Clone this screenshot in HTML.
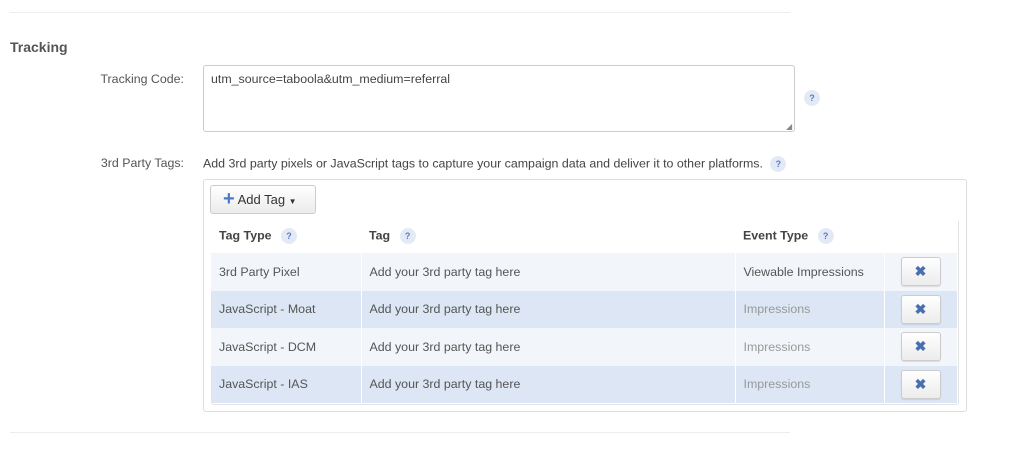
<!DOCTYPE html>
<html><head><style>
body{margin:0;width:1024px;height:450px;background:#fff;font-family:"Liberation Sans",Arial,sans-serif;font-size:12.4px;color:#444;position:relative;overflow:hidden}
.a{position:absolute}
.q{display:inline-block;width:16px;height:16px;border-radius:50%;background:#e3eaf6;color:#5a7bbf;font-size:9px;font-weight:bold;text-align:center;line-height:16px;vertical-align:middle}
.lab{position:absolute;right:840px;color:#555;font-size:12.4px}
table{border-collapse:collapse;position:absolute;left:211px;top:219px;width:747px}
td{height:37.5px;padding:0 8px;border-right:1px solid #fff;font-size:12.4px;color:#555}
th{height:34px;text-align:left;padding:0 8px;font-size:12.4px;color:#444;background:#fff}
tr.o td{background:#f2f5fa}
tr.e td{background:#dce6f4}
.x{width:38px;height:27px;margin-left:8px;border:1px solid #ccc;border-radius:3px;background:linear-gradient(#fff,#ececec);box-shadow:0 1px 1px rgba(0,0,0,.1);text-align:center;line-height:27px;color:#4a6fb0;font-weight:bold;font-size:14px}
.g{color:#999}
</style></head><body>
<div class="a" style="left:10px;top:12px;width:780px;height:1px;background:#eee"></div>
<div class="a" style="left:10px;top:39px;font-size:14px;font-weight:bold;color:#555">Tracking</div>
<div class="lab" style="top:72px">Tracking Code:</div>
<div class="a" style="left:203px;top:65px;width:590px;height:65px;border:1px solid #ccc;border-radius:3px"></div>
<div class="a" style="left:211px;top:72px;color:#444">utm_source=taboola&amp;utm_medium=referral</div>
<div class="a" style="left:786px;top:122px;font-size:8px;color:#888">◢</div>
<span class="q a" style="left:804px;top:90px">?</span>
<div class="lab" style="top:156px">3rd Party Tags:</div>
<div class="a" style="left:203px;top:156px;color:#444">Add 3rd party pixels or JavaScript tags to capture your campaign data and deliver it to other platforms. <span class="q" style="margin-left:4px">?</span></div>
<div class="a" style="left:203px;top:179px;width:762px;height:231px;border:1px solid #ddd;border-radius:3px"></div>
<div class="a" style="left:210px;top:185px;width:104px;height:27px;border:1px solid #ccc;border-radius:3px;background:linear-gradient(#fff,#ebebeb);line-height:27px;font-size:13px;color:#333">
<span style="color:#4a7bc4;font-size:20px;font-weight:bold;margin-left:12px;vertical-align:-1px">+</span> Add Tag <span style="font-size:8px">▼</span></div>
<div class="a" style="left:211px;top:219px;width:746px;height:184px;border:1px solid #e3e3e3;border-radius:3px"></div>
<table>
<tr><th style="width:134px">Tag Type <span class="q" style="margin-left:6px">?</span></th><th style="width:358px">Tag <span class="q" style="margin-left:6px">?</span></th><th style="width:133px">Event Type <span class="q" style="margin-left:6px">?</span></th><th></th></tr>
<tr class="o"><td>3rd Party Pixel</td><td>Add your 3rd party tag here</td><td>Viewable Impressions</td><td><div class="x">✖</div></td></tr>
<tr class="e"><td>JavaScript - Moat</td><td>Add your 3rd party tag here</td><td class="g">Impressions</td><td><div class="x">✖</div></td></tr>
<tr class="o"><td>JavaScript - DCM</td><td>Add your 3rd party tag here</td><td class="g">Impressions</td><td><div class="x">✖</div></td></tr>
<tr class="e"><td>JavaScript - IAS</td><td>Add your 3rd party tag here</td><td class="g">Impressions</td><td><div class="x">✖</div></td></tr>
</table>
<div class="a" style="left:10px;top:432px;width:780px;height:1px;background:#eee"></div>
</body></html>
